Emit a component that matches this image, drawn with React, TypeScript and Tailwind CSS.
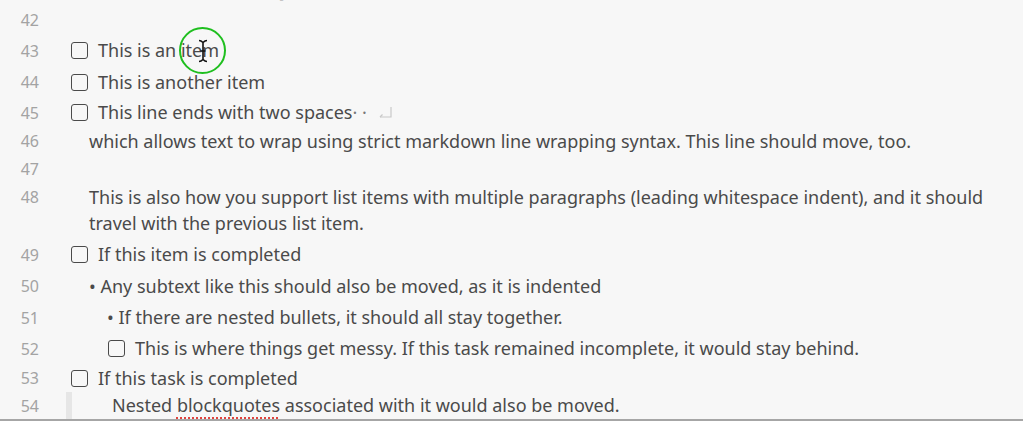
import type { ReactNode } from 'react';

const font = { fontFamily: '"Noto Sans", "Open Sans", sans-serif' };

function Checkbox() {
  return (
    <span className="inline-block h-[17px] w-[17px] shrink-0 rounded-[3px] border-[1.5px] border-[#4a4a4a]" />
  );
}

function ReturnMark() {
  return (
    <svg width="14" height="14" viewBox="0 0 14 14" className="ml-[12px] inline-block">
      <path d="M12 1 V11 H1" fill="none" stroke="#c8c8c8" strokeWidth="1.2" />
      <path d="M1 11 L3.5 8.5" fill="none" stroke="#c8c8c8" strokeWidth="1.2" />
    </svg>
  );
}

function Row({ n, h, children, top = false }: { n: number; h: string; children?: ReactNode; top?: boolean }) {
  return (
    <div className={`flex ${h} ${top ? 'items-start pt-px' : 'items-center'}`}>
      <div className="w-[39px] shrink-0 text-right text-[16px] leading-[26px] text-[#a3a3a3]">{n}</div>
      <div className="flex min-w-0 flex-1 items-center pr-[20px]">{children}</div>
    </div>
  );
}

export default function App() {
  return (
    <div className="relative h-[421px] w-[1023px] overflow-hidden bg-[#f7f7f7] text-[18px] text-[#4a4a4a]" style={font}>
      <div className="-mt-[25px] flex flex-col">
        <Row n={41} h="h-[30px]">
          <span className="ml-[200px] text-[#c4c4c4]">Really, a little bit more</span>
        </Row>
        <Row n={42} h="h-[30px]" />
        <Row n={43} h="h-[31px]">
          <span className="ml-[32px] flex items-center gap-[10px]">
            <Checkbox />
            <span>This is an item</span>
          </span>
        </Row>
        <Row n={44} h="h-[32px]">
          <span className="ml-[32px] flex items-center gap-[10px]">
            <Checkbox />
            <span>This is another item</span>
          </span>
        </Row>
        <Row n={45} h="h-[29px]">
          <span className="ml-[32px] flex items-center gap-[10px]">
            <Checkbox />
            <span className="flex items-center">
              This line ends with two spaces
              <span className="text-[#777]">·&nbsp;·</span>
              <ReturnMark />
            </span>
          </span>
        </Row>
        <Row n={46} h="h-[28px]">
          <span className="ml-[50px]">
            which allows text to wrap using strict markdown line wrapping syntax. This line should move, too.
          </span>
        </Row>
        <Row n={47} h="h-[28px]" />
        <Row n={48} h="h-[56px]" top>
          <p className="ml-[50px] leading-[26px]">
            This is also how you support list items with multiple paragraphs (leading whitespace indent), and it should
            travel with the previous list item.
          </p>
        </Row>
        <Row n={49} h="h-[31px]">
          <span className="ml-[32px] flex items-center gap-[10px]">
            <Checkbox />
            <span>If this item is completed</span>
          </span>
        </Row>
        <Row n={50} h="h-[32px]">
          <span className="ml-[50px]">• Any subtext like this should also be moved, as it is indented</span>
        </Row>
        <Row n={51} h="h-[31px]">
          <span className="ml-[68px]">• If there are nested bullets, it should all stay together.</span>
        </Row>
        <Row n={52} h="h-[31px]">
          <span className="ml-[69px] flex items-center gap-[10px]">
            <Checkbox />
            <span>This is where things get messy. If this task remained incomplete, it would stay behind.</span>
          </span>
        </Row>
        <Row n={53} h="h-[28px]">
          <span className="ml-[32px] flex items-center gap-[10px]">
            <Checkbox />
            <span>If this task is completed</span>
          </span>
        </Row>
        <Row n={54} h="h-[27px]">
          <span className="ml-[27px] flex h-[27px] items-center">
            <span className="h-full w-[6px] bg-[#e6e6e6]" />
            <span className="ml-[40px]">
              Nested{' '}
              <span className="underline decoration-[#e0443e] decoration-dotted decoration-2 underline-offset-[5px]">
                blockquotes
              </span>{' '}
              associated with it would also be moved.
            </span>
          </span>
        </Row>
      </div>
      <div className="absolute bottom-0 left-0 h-[2px] w-full bg-[#a6a6a6]" />

      {/* click indicator + text cursor */}
      <div className="absolute left-[179px] top-[27px] h-[47px] w-[47px] rounded-full border-2 border-[#1fbf1f]" />
      <svg className="absolute left-[197px] top-[39px]" width="12" height="24" viewBox="0 0 12 24">
        <path d="M2 1.5 C4 1.5 5 2.5 6 3.5 C7 2.5 8 1.5 10 1.5 M6 3.5 V20.5 M2 22.5 C4 22.5 5 21.5 6 20.5 C7 21.5 8 22.5 10 22.5 M3.5 12 H8.5" fill="none" stroke="#111" strokeWidth="1.6" />
      </svg>
    </div>
  );
}
